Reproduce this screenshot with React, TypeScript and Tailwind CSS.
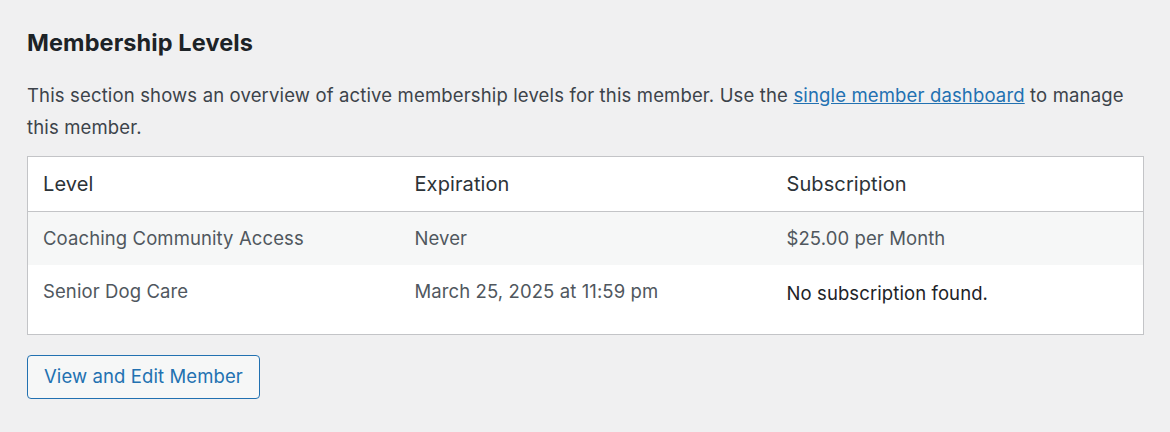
const rows = [
  {
    level: "Coaching Community Access",
    expiration: "Never",
    subscription: "$25.00 per Month",
  },
  {
    level: "Senior Dog Care",
    expiration: "March 25, 2025 at 11:59 pm",
    subscription: "No subscription found.",
  },
];

export default function App() {
  return (
    <main
      className="min-h-[432px] w-[1170px] bg-[#f0f0f1] pl-[27px] pr-[26px] pt-[28px] text-[#3c434a]"
      style={{ fontFamily: "Inter, 'Open Sans', sans-serif" }}
    >
      <h2 className="text-[23.5px] font-bold leading-[30px] tracking-[0.1px] text-[#1d2327]">
        Membership Levels
      </h2>

      <p className="mt-[21px] text-[18.5px] leading-[32px] tracking-[0.15px] text-[#3c434a]">
        This section shows an overview of active membership levels for this
        member. Use the{" "}
        <a href="#" className="text-[#2271b1] underline">
          single member dashboard
        </a>{" "}
        to manage this member.
      </p>

      <table className="mt-[13px] w-full table-fixed border border-[#c3c4c7] bg-white text-[18.5px] tracking-[0.1px]">
        <thead>
          <tr className="h-[55px] border-b border-[#c3c4c7] text-[20px]">
            <th className="px-[15px] text-left font-normal text-[#2c3338]">Level</th>
            <th className="px-[15px] text-left font-normal text-[#2c3338]">Expiration</th>
            <th className="px-[15px] text-left font-normal text-[#2c3338]">Subscription</th>
          </tr>
        </thead>
        <tbody>
          <tr className="h-[53px] bg-[#f6f7f7] text-[#50575e]">
            <td className="px-[15px] pt-[1px]">{rows[0].level}</td>
            <td className="px-[15px] pt-[1px]">{rows[0].expiration}</td>
            <td className="px-[15px] pt-[1px]">{rows[0].subscription}</td>
          </tr>
          <tr className="h-[70px] text-[#50575e]">
            <td className="px-[15px] pb-[15px] align-middle">{rows[1].level}</td>
            <td className="px-[15px] pb-[15px]">{rows[1].expiration}</td>
            <td className="px-[15px] pb-[10px] text-[#1d2327]">{rows[1].subscription}</td>
          </tr>
        </tbody>
      </table>

      <button className="mt-[20px] h-[44px] rounded-[4px] border border-[#2271b1] bg-[#f6f7f7] px-[16px] text-[18.5px] tracking-[0.1px] text-[#2271b1]">
        View and Edit Member
      </button>
    </main>
  );
}
